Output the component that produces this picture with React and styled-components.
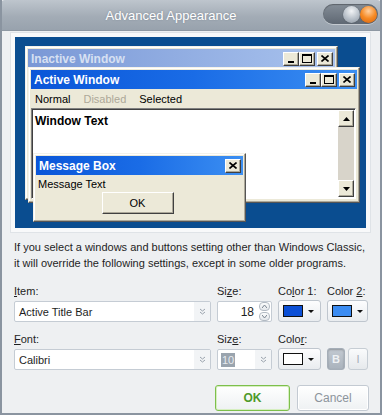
import { createGlobalStyle } from 'styled-components';
import styled from 'styled-components';

const GlobalStyle = createGlobalStyle`
  html, body {
    margin: 0;
    padding: 0;
    background: #eef0f2;
  }
`;

const xpFont = `'Liberation Sans', Arial, sans-serif`;
const uiFont = `'Liberation Sans', Arial, sans-serif`;

export default function App() {
  return (
    <>
      <GlobalStyle />
      <Dialog>
        <TitleBar>
          <Title>Advanced Appearance</Title>
          <Pill>
            <Ball color="gray" />
            <Ball color="orange" />
          </Pill>
        </TitleBar>
        <Body>
          <PreviewFrame>
            <Desktop>
              <XpWindow left={10} top={9} width={313} height={154}>
                <Caption inactive>
                  <span>Inactive Window</span>
                  <CaptionButtons />
                </Caption>
              </XpWindow>
              <XpWindow left={13} top={30} width={332} height={136}>
                <Caption>
                  <span>Active Window</span>
                  <CaptionButtons />
                </Caption>
                <MenuBar>
                  <MenuItem>Normal</MenuItem>
                  <MenuItem disabled>Disabled</MenuItem>
                  <MenuItem>Selected</MenuItem>
                </MenuBar>
                <TextArea>
                  <WindowText>Window Text</WindowText>
                  <ScrollBar>
                    <ScrollArrow>
                      <svg width="7" height="4" viewBox="0 0 7 4"><path d="M3.5 0 L7 4 L0 4 Z" fill="#000" /></svg>
                    </ScrollArrow>
                    <ScrollArrow>
                      <svg width="7" height="4" viewBox="0 0 7 4"><path d="M0 0 L7 0 L3.5 4 Z" fill="#000" /></svg>
                    </ScrollArrow>
                  </ScrollBar>
                </TextArea>
              </XpWindow>
              <XpWindow left={18} top={116} width={213} height={69}>
                <Caption>
                  <span>Message Box</span>
                  <CapButton><CloseGlyph /></CapButton>
                </Caption>
                <MessageText>Message Text</MessageText>
                <MessageFooter>
                  <XpButton>OK</XpButton>
                </MessageFooter>
              </XpWindow>
            </Desktop>
          </PreviewFrame>

          <Notice>
            If you select a windows and buttons setting other than Windows Classic,
            <br />
            it will override the following settings, except in some older programs.
          </Notice>

          <Form>
            <Label><u>I</u>tem:</Label>
            <Label>Si<u>z</u>e:</Label>
            <Label>Co<u>l</u>or 1:</Label>
            <Label>Color <u>2</u>:</Label>

            <Combo>
              <ComboText>Active Title Bar</ComboText>
              <Chevron />
            </Combo>
            <Spin>
              <SpinValue>18</SpinValue>
              <SpinButtons>
                <SpinBtn><svg width="5" height="3" viewBox="0 0 5 3"><path d="M0 3 L2.5 0 L5 3" stroke="#7a8490" fill="none" /></svg></SpinBtn>
                <SpinBtn><svg width="5" height="3" viewBox="0 0 5 3"><path d="M0 0 L2.5 3 L5 0" stroke="#7a8490" fill="none" /></svg></SpinBtn>
              </SpinButtons>
            </Spin>
            <ColorButton>
              <Swatch color="#0b4fd6" />
              <DropTri />
            </ColorButton>
            <ColorButton>
              <Swatch color="#3b8cf2" />
              <DropTri />
            </ColorButton>

            <Label spaced><u>F</u>ont:</Label>
            <Label spaced>Siz<u>e</u>:</Label>
            <Label spaced>Colo<u>r</u>:</Label>
            <Label spaced />

            <Combo>
              <ComboText>Calibri</ComboText>
              <Chevron />
            </Combo>
            <Combo>
              <SizeSel>10</SizeSel>
              <Chevron />
            </Combo>
            <ColorButton>
              <Swatch color="#ffffff" />
              <DropTri />
            </ColorButton>
            <StyleButtons>
              <StyleBtn pressed>B</StyleBtn>
              <StyleBtn>I</StyleBtn>
            </StyleButtons>
          </Form>

          <Footer>
            <DialogButton primary>OK</DialogButton>
            <DialogButton>Cancel</DialogButton>
          </Footer>
        </Body>
      </Dialog>
    </>
  );
}

function CloseGlyph() {
  return (
    <svg width="8" height="7" viewBox="0 0 8 7">
      <path d="M0.5 0.5 L7.5 6.5 M7.5 0.5 L0.5 6.5" stroke="#000" strokeWidth="1.6" />
    </svg>
  );
}

function CaptionButtons() {
  return (
    <CapGroup>
      <CapButton>
        <svg width="8" height="8" viewBox="0 0 8 8"><rect x="1" y="6" width="6" height="2" fill="#000" /></svg>
      </CapButton>
      <CapButton>
        <svg width="10" height="9" viewBox="0 0 10 9"><rect x="0.5" y="0.5" width="9" height="8" fill="none" stroke="#000" /><rect x="0" y="0" width="10" height="2" fill="#000" /></svg>
      </CapButton>
      <CapButton gap>
        <CloseGlyph />
      </CapButton>
    </CapGroup>
  );
}

function Chevron() {
  return (
    <ChevronBox>
      <svg width="7" height="7" viewBox="0 0 7 7">
        <path d="M1 1 L3.5 3 L6 1 M1 4 L3.5 6 L6 4" stroke="#9aa3ad" fill="none" />
      </svg>
    </ChevronBox>
  );
}

function DropTri() {
  return (
    <svg width="6" height="3" viewBox="0 0 6 3"><path d="M0 0 L6 0 L3 3 Z" fill="#111" /></svg>
  );
}

const Dialog = styled.div`
  width: 382px;
  height: 415px;
  box-sizing: border-box;
  display: flex;
  flex-direction: column;
  background: #eef0f2;
  border-left: 2px solid #8a94a0;
  border-right: 2px solid #8a94a0;
  border-bottom: 2px solid #8a94a0;
  overflow: hidden;
`;

const TitleBar = styled.div`
  height: 30px;
  flex: none;
  margin: 0 -2px;
  position: relative;
  display: flex;
  align-items: center;
  justify-content: center;
  background: linear-gradient(#bec5cd, #a3acb6 55%, #98a2ad);
  border-bottom: 1px solid #8e98a3;
  border-radius: 5px 5px 0 0;
`;

const Title = styled.div`
  font-family: 'Liberation Sans', Arial, sans-serif;
  font-size: 13px;
  color: #fff;
  text-shadow: 0 0 2px #7d8692;
  margin-right: 40px;
`;

const Pill = styled.div`
  position: absolute;
  right: 4px;
  top: 4px;
  width: 55px;
  height: 20px;
  border-radius: 10px;
  background: linear-gradient(#858e98, #5f6873);
  box-shadow: inset 0 1px 1px rgba(0, 0, 0, 0.3), 0 1px 0 rgba(255, 255, 255, 0.4);
  display: flex;
  justify-content: flex-end;
  align-items: center;
  padding-right: 1px;
  box-sizing: border-box;
`;

const Ball = styled.div`
  width: 17px;
  height: 17px;
  border-radius: 50%;
  background: ${(p) =>
    p.color === 'orange'
      ? 'radial-gradient(circle at 50% 30%, #ffd0a0, #f68a24 50%, #d5610d)'
      : 'radial-gradient(circle at 50% 30%, #f2f4f6, #b7bfc8 55%, #8d96a0)'};
  box-shadow: 0 0 1px rgba(0, 0, 0, 0.5);
`;

const Body = styled.div`
  flex: 1;
  display: flex;
  flex-direction: column;
  padding: 2px 8px 0 9px;
`;

const PreviewFrame = styled.div`
  height: 199px;
  flex: none;
  box-sizing: border-box;
  border: 4px solid #f8f9fa;
  outline: 1px solid #dfe3e7;
  margin-right: 2px;
`;

const Desktop = styled.div`
  position: relative;
  height: 100%;
  background: #0a4d90;
  overflow: hidden;
`;

const XpWindow = styled.div`
  position: absolute;
  left: ${(p) => p.left}px;
  top: ${(p) => p.top}px;
  width: ${(p) => p.width}px;
  height: ${(p) => p.height}px;
  box-sizing: border-box;
  background: #ece9d8;
  border: 1px solid;
  border-color: #f4f2ea #555 #555 #f4f2ea;
  box-shadow: inset -1px -1px 0 #aca899, inset 1px 1px 0 #fff;
  padding: 2px;
  display: flex;
  flex-direction: column;
`;

const Caption = styled.div`
  height: 19px;
  flex: none;
  display: flex;
  align-items: center;
  justify-content: space-between;
  padding: 0 2px 0 3px;
  background: ${(p) =>
    p.inactive
      ? 'linear-gradient(90deg, #7a98d6, #a9c3ee)'
      : 'linear-gradient(90deg, #0a56d8, #1a6ce6 50%, #3c8ff2)'};
  color: ${(p) => (p.inactive ? '#d7e0f2' : '#fff')};
  font-family: ${xpFont};
  font-weight: bold;
  font-size: 12px;
  white-space: nowrap;
`;

const CapGroup = styled.div`
  display: flex;
`;

const CapButton = styled.div`
  width: 16px;
  height: 14px;
  margin-left: ${(p) => (p.gap ? '2px' : '0')};
  box-sizing: border-box;
  background: #ece9d8;
  border: 1px solid;
  border-color: #fff #404040 #404040 #fff;
  box-shadow: inset -1px -1px 0 #aca899;
  display: flex;
  align-items: center;
  justify-content: center;
`;

const MenuBar = styled.div`
  height: 19px;
  flex: none;
  display: flex;
  align-items: center;
  gap: 13px;
  padding-left: 4px;
  font-family: ${xpFont};
  font-size: 11px;
`;

const MenuItem = styled.span`
  color: ${(p) => (p.disabled ? '#aca899' : '#000')};
`;

const TextArea = styled.div`
  flex: 1;
  display: flex;
  background: #fff;
  border: 1px solid;
  border-color: #808080 #fff #fff #808080;
  box-shadow: inset 1px 1px 0 #404040;
  margin: 0 1px 1px 0;
`;

const WindowText = styled.div`
  flex: 1;
  padding: 5px 0 0 3px;
  font-family: ${xpFont};
  font-weight: bold;
  font-size: 12px;
`;

const ScrollBar = styled.div`
  width: 16px;
  margin: 1px 1px 1px 0;
  display: flex;
  flex-direction: column;
  justify-content: space-between;
  background: #d8d4ca;
`;

const ScrollArrow = styled.div`
  height: 17px;
  box-sizing: border-box;
  background: #ece9d8;
  border: 1px solid;
  border-color: #fff #404040 #404040 #fff;
  box-shadow: inset -1px -1px 0 #aca899;
  display: flex;
  align-items: center;
  justify-content: center;
`;

const MessageText = styled.div`
  padding: 3px 0 0 2px;
  font-family: ${xpFont};
  font-size: 11px;
`;

const MessageFooter = styled.div`
  display: flex;
  justify-content: center;
  padding-top: 2px;
`;

const XpButton = styled.div`
  width: 72px;
  height: 22px;
  box-sizing: border-box;
  border: 1px solid;
  border-color: #fff #404040 #404040 #fff;
  box-shadow: inset -1px -1px 0 #aca899;
  display: flex;
  align-items: center;
  justify-content: center;
  font-family: ${xpFont};
  font-size: 11px;
  margin-left: -4px;
`;

const Notice = styled.p`
  margin: 7px 0 0 3px;
  font-family: ${uiFont};
  font-size: 11px;
  line-height: 16px;
  color: #1e1e1e;
  white-space: nowrap;
`;

const Form = styled.div`
  margin: 13px 0 0 3px;
  display: grid;
  grid-template-columns: 197px 55px 43px 41px;
  column-gap: 6px;
  font-family: ${uiFont};
  font-size: 11px;
  color: #1e1e1e;
`;

const Label = styled.div`
  height: 15px;
  margin: ${(p) => (p.spaced ? '10px' : '0')} 0 2px;
  line-height: 15px;
  white-space: nowrap;
  u {
    text-decoration: underline;
    text-underline-offset: 1px;
  }
`;

const Combo = styled.div`
  height: 21px;
  box-sizing: border-box;
  background: #fff;
  border: 1px solid #c5ccd4;
  border-radius: 2px;
  display: flex;
  align-items: center;
`;

const ComboText = styled.span`
  flex: 1;
  padding-left: 4px;
`;

const ChevronBox = styled.div`
  width: 16px;
  height: 100%;
  display: flex;
  align-items: center;
  justify-content: center;
  background: #f2f4f6;
  margin-left: auto;
`;

const Spin = styled(Combo)`
  padding-right: 1px;
`;

const SpinValue = styled.span`
  flex: 1;
  text-align: right;
  padding-right: 5px;
  font-size: 12px;
`;

const SpinButtons = styled.div`
  display: flex;
  flex-direction: column;
  gap: 1px;
`;

const SpinBtn = styled.div`
  width: 9px;
  height: 7px;
  border: 1px solid #b3bbc4;
  border-radius: 4px;
  background: linear-gradient(#fbfcfc, #e3e7eb);
  display: flex;
  align-items: center;
  justify-content: center;
`;

const SizeSel = styled.span`
  margin-left: 3px;
  padding: 0 1px;
  background: #9aa4ae;
  color: #e6eaee;
  font-size: 11px;
  line-height: 14px;
`;

const ColorButton = styled.div`
  height: 22px;
  margin-top: -1px;
  box-sizing: border-box;
  border: 1px solid #bfc6ce;
  border-radius: 3px;
  background: linear-gradient(#fdfdfe, #e9ecef);
  display: flex;
  align-items: center;
  gap: 5px;
  padding-left: 4px;
`;

const Swatch = styled.div`
  width: 18px;
  height: 10px;
  background: ${(p) => p.color};
  border: 1px solid #111;
`;

const StyleButtons = styled.div`
  display: flex;
  gap: 3px;
  margin-top: -1px;
`;

const StyleBtn = styled.div`
  width: ${(p) => (p.pressed ? '18px' : '20px')};
  height: 22px;
  box-sizing: border-box;
  border-radius: 3px;
  border: 1px solid ${(p) => (p.pressed ? '#a5aeb8' : '#c6cdd4')};
  background: ${(p) =>
    p.pressed ? 'linear-gradient(#c2c9d1, #aab3bd)' : 'linear-gradient(#fafbfc, #e6e9ec)'};
  color: ${(p) => (p.pressed ? '#eef1f4' : '#a8b0b9')};
  display: flex;
  align-items: center;
  justify-content: center;
  font-family: 'Liberation Sans', Arial, sans-serif;
  font-size: 11px;
  font-weight: ${(p) => (p.pressed ? 'bold' : 'normal')};
  box-shadow: ${(p) => (p.pressed ? 'inset 0 1px 2px rgba(0,0,0,0.25)' : 'none')};
`;

const Footer = styled.div`
  margin-top: 15px;
  display: flex;
  justify-content: flex-end;
  gap: 7px;
  padding-right: 3px;
`;

const DialogButton = styled.div`
  width: ${(p) => (p.primary ? '75px' : '72px')};
  height: 26px;
  box-sizing: border-box;
  border-radius: 3px;
  border: 1px solid ${(p) => (p.primary ? '#7dbf4c' : '#c3cad2')};
  box-shadow: ${(p) => (p.primary ? 'inset 0 0 0 1px #d6efc0' : 'inset 0 0 0 1px #fff')};
  background: linear-gradient(#ffffff, #eef1f3);
  display: flex;
  align-items: center;
  justify-content: center;
  font-family: ${uiFont};
  font-size: 12px;
  font-weight: ${(p) => (p.primary ? 'bold' : 'normal')};
  color: ${(p) => (p.primary ? '#4f9a2a' : '#8c949c')};
`;
